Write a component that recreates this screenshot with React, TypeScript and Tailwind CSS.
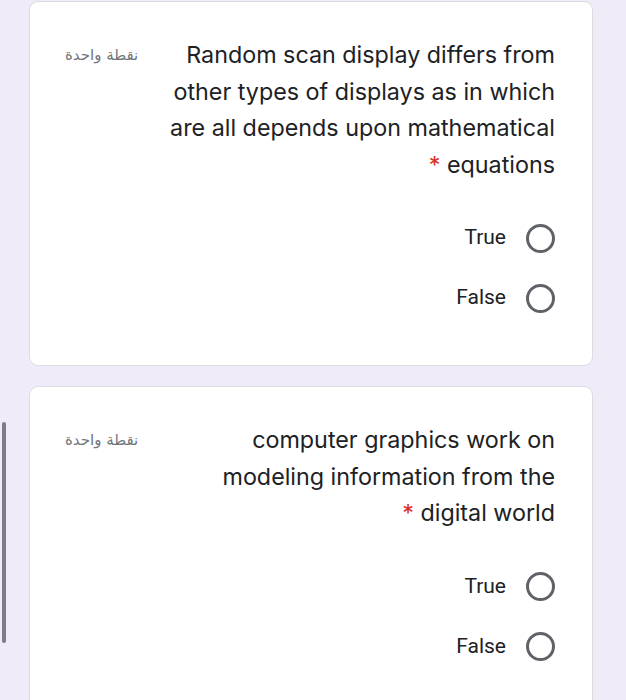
import React from "react";

type Q = { lines: string[]; last: string };

const questions: Q[] = [
  {
    lines: [
      "Random scan display differs from",
      "other types of displays as in which",
      "are all depends upon mathematical",
    ],
    last: "equations",
  },
  {
    lines: ["computer graphics work on", "modeling information from the"],
    last: "digital world",
  },
];

function Radio() {
  return (
    <span className="block w-[29px] h-[29px] rounded-full border-[3px] border-[#5f6368] shrink-0" />
  );
}

function Card({ q }: { q: Q }) {
  return (
    <div className="bg-white border border-[#dadce0] rounded-[9px] pl-[35px] pr-[37px] pt-[35px] pb-[37px]">
      <div className="flex justify-between items-start">
        <div
          className="text-[15px] leading-[36.5px] text-[#70757a]"
          style={{ fontFamily: '"DejaVu Sans", "Noto Sans", sans-serif' }}
          dir="rtl"
        >
          نقطة واحدة
        </div>
        <div
          className="text-right text-[23.3px] leading-[36.5px] text-[#202124]"
          style={{ fontFamily: 'Inter, "Liberation Sans", sans-serif' }}
        >
          {q.lines.map((l) => (
            <div key={l}>{l}</div>
          ))}
          <div>
            <span className="text-[#d93025]">*</span> {q.last}
          </div>
        </div>
      </div>
      <div className="mt-[25px] flex flex-col">
        {["True", "False"].map((o) => (
          <div key={o} className="h-[60px] flex items-center justify-end gap-[20px]">
            <span
              className="text-[21px] text-[#202124]"
              style={{ fontFamily: 'Roboto, "Liberation Sans", sans-serif' }}
            >
              {o}
            </span>
            <Radio />
          </div>
        ))}
      </div>
    </div>
  );
}

export default function App() {
  return (
    <div className="relative w-[626px] h-[700px] overflow-hidden bg-[#f0ebf8] pt-px pl-[29px] pr-[33px]">
      <div className="flex flex-col gap-[20px]">
        {questions.map((q, i) => (
          <Card key={i} q={q} />
        ))}
      </div>
      <div className="absolute left-[2px] top-[422px] w-[4px] h-[221px] rounded-full bg-[#807b87]" />
    </div>
  );
}
